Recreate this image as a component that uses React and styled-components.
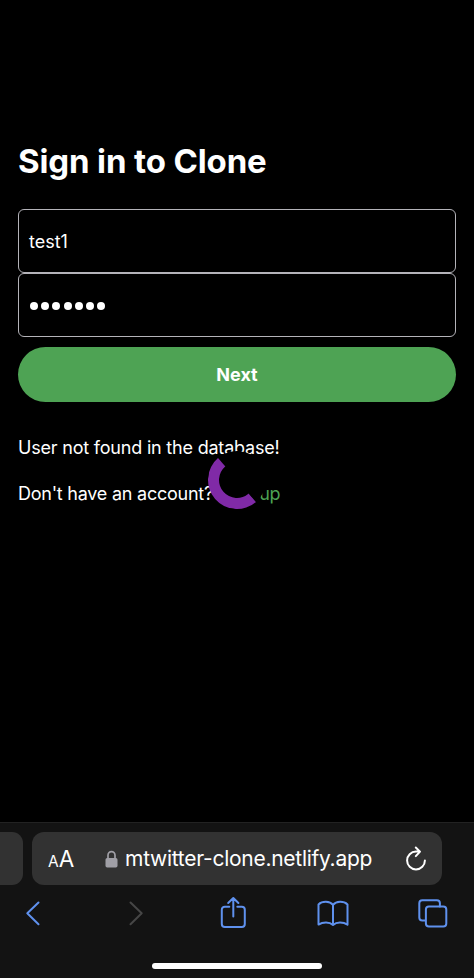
import styled, { createGlobalStyle } from 'styled-components';

const GlobalStyle = createGlobalStyle`
  * {
    box-sizing: border-box;
  }

  body {
    margin: 0;
    background: #000;
    color: #fff;
    font-family: Inter, 'Liberation Sans', sans-serif;
    overflow: hidden;
  }
`;

const PhoneStyled = styled.div`
  display: flex;
  flex-direction: column;
  width: 474px;
  height: 978px;
  background: #000;
`;

const PageStyled = styled.main`
  position: relative;
  flex: 1;
  display: flex;
  flex-direction: column;
  padding: 141px 18px 0;
`;

const TitleStyled = styled.h1`
  margin: 0 0 28px;
  font-size: 33px;
  line-height: 40px;
  font-weight: 700;
  letter-spacing: ${({ $spacing }) => $spacing}px;
  white-space: nowrap;
`;

const FieldStyled = styled.div`
  display: flex;
  align-items: center;
  height: 64px;
  padding: 1px 10px 0;
  border: 1px solid #b4b3b9;
  border-radius: 6px;
  font-size: 18px;
`;

const DotsStyled = styled.div`
  display: flex;
  gap: 3.2px;
  padding-left: 1px;
`;

const DotStyled = styled.span`
  width: 8px;
  height: 8px;
  border-radius: 50%;
  background: #fff;
`;

const NextButtonStyled = styled.button`
  height: 55px;
  margin: 9.5px 0 34.5px;
  padding: 1px 0 0;
  border: 0;
  border-radius: 28px;
  background: #4ea354;
  color: #fff;
  font: inherit;
  font-size: 18px;
  font-weight: 700;
`;

const TextStyled = styled.p`
  margin: 0 0 22px;
  font-size: 18px;
  line-height: 24px;
  letter-spacing: ${({ $spacing }) => $spacing}px;
  white-space: nowrap;
`;

const LinkStyled = styled.a`
  color: #4ea354;
`;

const SpinnerStyled = styled.div`
  position: absolute;
  top: 451px;
  left: 208px;
  width: 58px;
  height: 58px;
  border: 11.5px solid #000;
  border-left-color: #802aa7;
  border-bottom-color: #802aa7;
  border-radius: 50%;
  background: #000;
  transform: rotate(4deg);
`;

const BrowserStyled = styled.footer`
  display: flex;
  flex-direction: column;
  height: 156px;
  padding-top: 9px;
  border-top: 1px solid #222;
  background: #131313;
`;

const TabsStyled = styled.div`
  display: flex;
  gap: 9px;
`;

const PreviousTabStyled = styled.div`
  width: 23px;
  height: 53px;
  border-radius: 0 11px 11px 0;
  background: #323232;
`;

const AddressStyled = styled.div`
  display: flex;
  align-items: center;
  width: 410px;
  height: 53px;
  padding: 0 15px 0 16px;
  border-radius: 12px;
  background: #323232;
`;

const TextSizeStyled = styled.span`
  display: flex;
  align-items: baseline;
  width: 57px;
  font-size: 22.5px;

  small {
    font-size: 15.5px;
  }
`;

const UrlStyled = styled.span`
  flex: 1;
  padding-left: 7px;
  font-size: 21px;
  letter-spacing: ${({ $spacing }) => $spacing}px;
  white-space: nowrap;
`;

const ToolbarStyled = styled.nav`
  display: flex;
  justify-content: space-between;
  padding: 8px 25px 0 17px;
`;

const IconStyled = styled.svg`
  display: block;
  flex: none;
  fill: none;
  stroke: ${({ $color }) => $color || '#5f91ee'};
  stroke-width: 2;
  stroke-linecap: round;
  stroke-linejoin: round;
`;

const HomeIndicatorStyled = styled.div`
  width: 170px;
  height: 6px;
  margin: auto auto 9px;
  border-radius: 3px;
  background: #fff;
`;

const PASSWORD_LENGTH = 7;

const LockIcon = () => (
  <IconStyled width="13" height="18" viewBox="0 0 13 18" $color="#a09fa6">
    <path d="M3 9V5.2a3.5 3.5 0 0 1 7 0V9" strokeWidth="1.7" />
    <rect x=".5" y="8" width="12" height="9.5" rx="1.7" fill="#a09fa6" stroke="none" />
  </IconStyled>
);

const ReloadIcon = () => (
  <IconStyled width="22" height="26" viewBox="0 0 22 26" $color="#fff">
    <path d="M14.8 5.6H11a8.9 8.9 0 1 0 8.9 8.9M10.8 1.5l4.2 4.1-4.2 4.5" />
  </IconStyled>
);

const BackIcon = () => (
  <IconStyled width="32" height="38" viewBox="0 0 32 38">
    <path d="M21.5 9.5 10.3 20.3l11.2 10.9" />
  </IconStyled>
);

const ForwardIcon = () => (
  <IconStyled width="32" height="38" viewBox="0 0 32 38" $color="#464646">
    <path d="m13.5 9.5 11.2 10.8-11.2 10.9" />
  </IconStyled>
);

const ShareIcon = () => (
  <IconStyled width="32" height="38" viewBox="0 0 32 38">
    <path d="M12.3 13.7H7.8A3 3 0 0 0 4.8 16.7V31a3 3 0 0 0 3 3h17a3 3 0 0 0 3-3V16.7a3 3 0 0 0-3-3h-4.5M16.3 23.5V5.1M11.2 10l5.1-5 5.1 5" />
  </IconStyled>
);

const BookIcon = () => (
  <IconStyled width="32" height="38" viewBox="0 0 32 38">
    <path d="M16 11.8C12.8 7.9 5.2 7.9 1.5 11.4v20.2c4.2-2.6 10.8-3 14.5.3 3.7-3.3 10.3-2.9 14.5-.3V11.4C26.8 7.9 19.2 7.9 16 11.8zv20" />
  </IconStyled>
);

const TabsIcon = () => (
  <IconStyled width="32" height="38" viewBox="0 0 32 38">
    <path d="M7.8 27.4H5.3a3 3 0 0 1-3-3V10.2a3 3 0 0 1 3-3h14.6a3 3 0 0 1 3 3v3.2" />
    <rect x="8.9" y="13.4" width="20.4" height="20" rx="3" />
  </IconStyled>
);

const App = () => (
  <>
    <GlobalStyle />
    <PhoneStyled>
      <PageStyled>
        <TitleStyled $spacing={-0.13}>Sign in to Clone</TitleStyled>
        <FieldStyled>test1</FieldStyled>
        <FieldStyled>
          <DotsStyled>
            {Array.from({ length: PASSWORD_LENGTH }, (_, i) => (
              <DotStyled key={i} />
            ))}
          </DotsStyled>
        </FieldStyled>
        <NextButtonStyled type="button">Next</NextButtonStyled>
        <TextStyled $spacing={-0.2}>User not found in the database!</TextStyled>
        <TextStyled $spacing={-0.24}>
          Don't have an account? <LinkStyled>Sign up</LinkStyled>
        </TextStyled>
        <SpinnerStyled />
      </PageStyled>
      <BrowserStyled>
        <TabsStyled>
          <PreviousTabStyled />
          <AddressStyled>
            <TextSizeStyled>
              <small>A</small>A
            </TextSizeStyled>
            <LockIcon />
            <UrlStyled $spacing={-0.27}>mtwitter-clone.netlify.app</UrlStyled>
            <ReloadIcon />
          </AddressStyled>
        </TabsStyled>
        <ToolbarStyled>
          <BackIcon />
          <ForwardIcon />
          <ShareIcon />
          <BookIcon />
          <TabsIcon />
        </ToolbarStyled>
        <HomeIndicatorStyled />
      </BrowserStyled>
    </PhoneStyled>
  </>
);

export default App;
